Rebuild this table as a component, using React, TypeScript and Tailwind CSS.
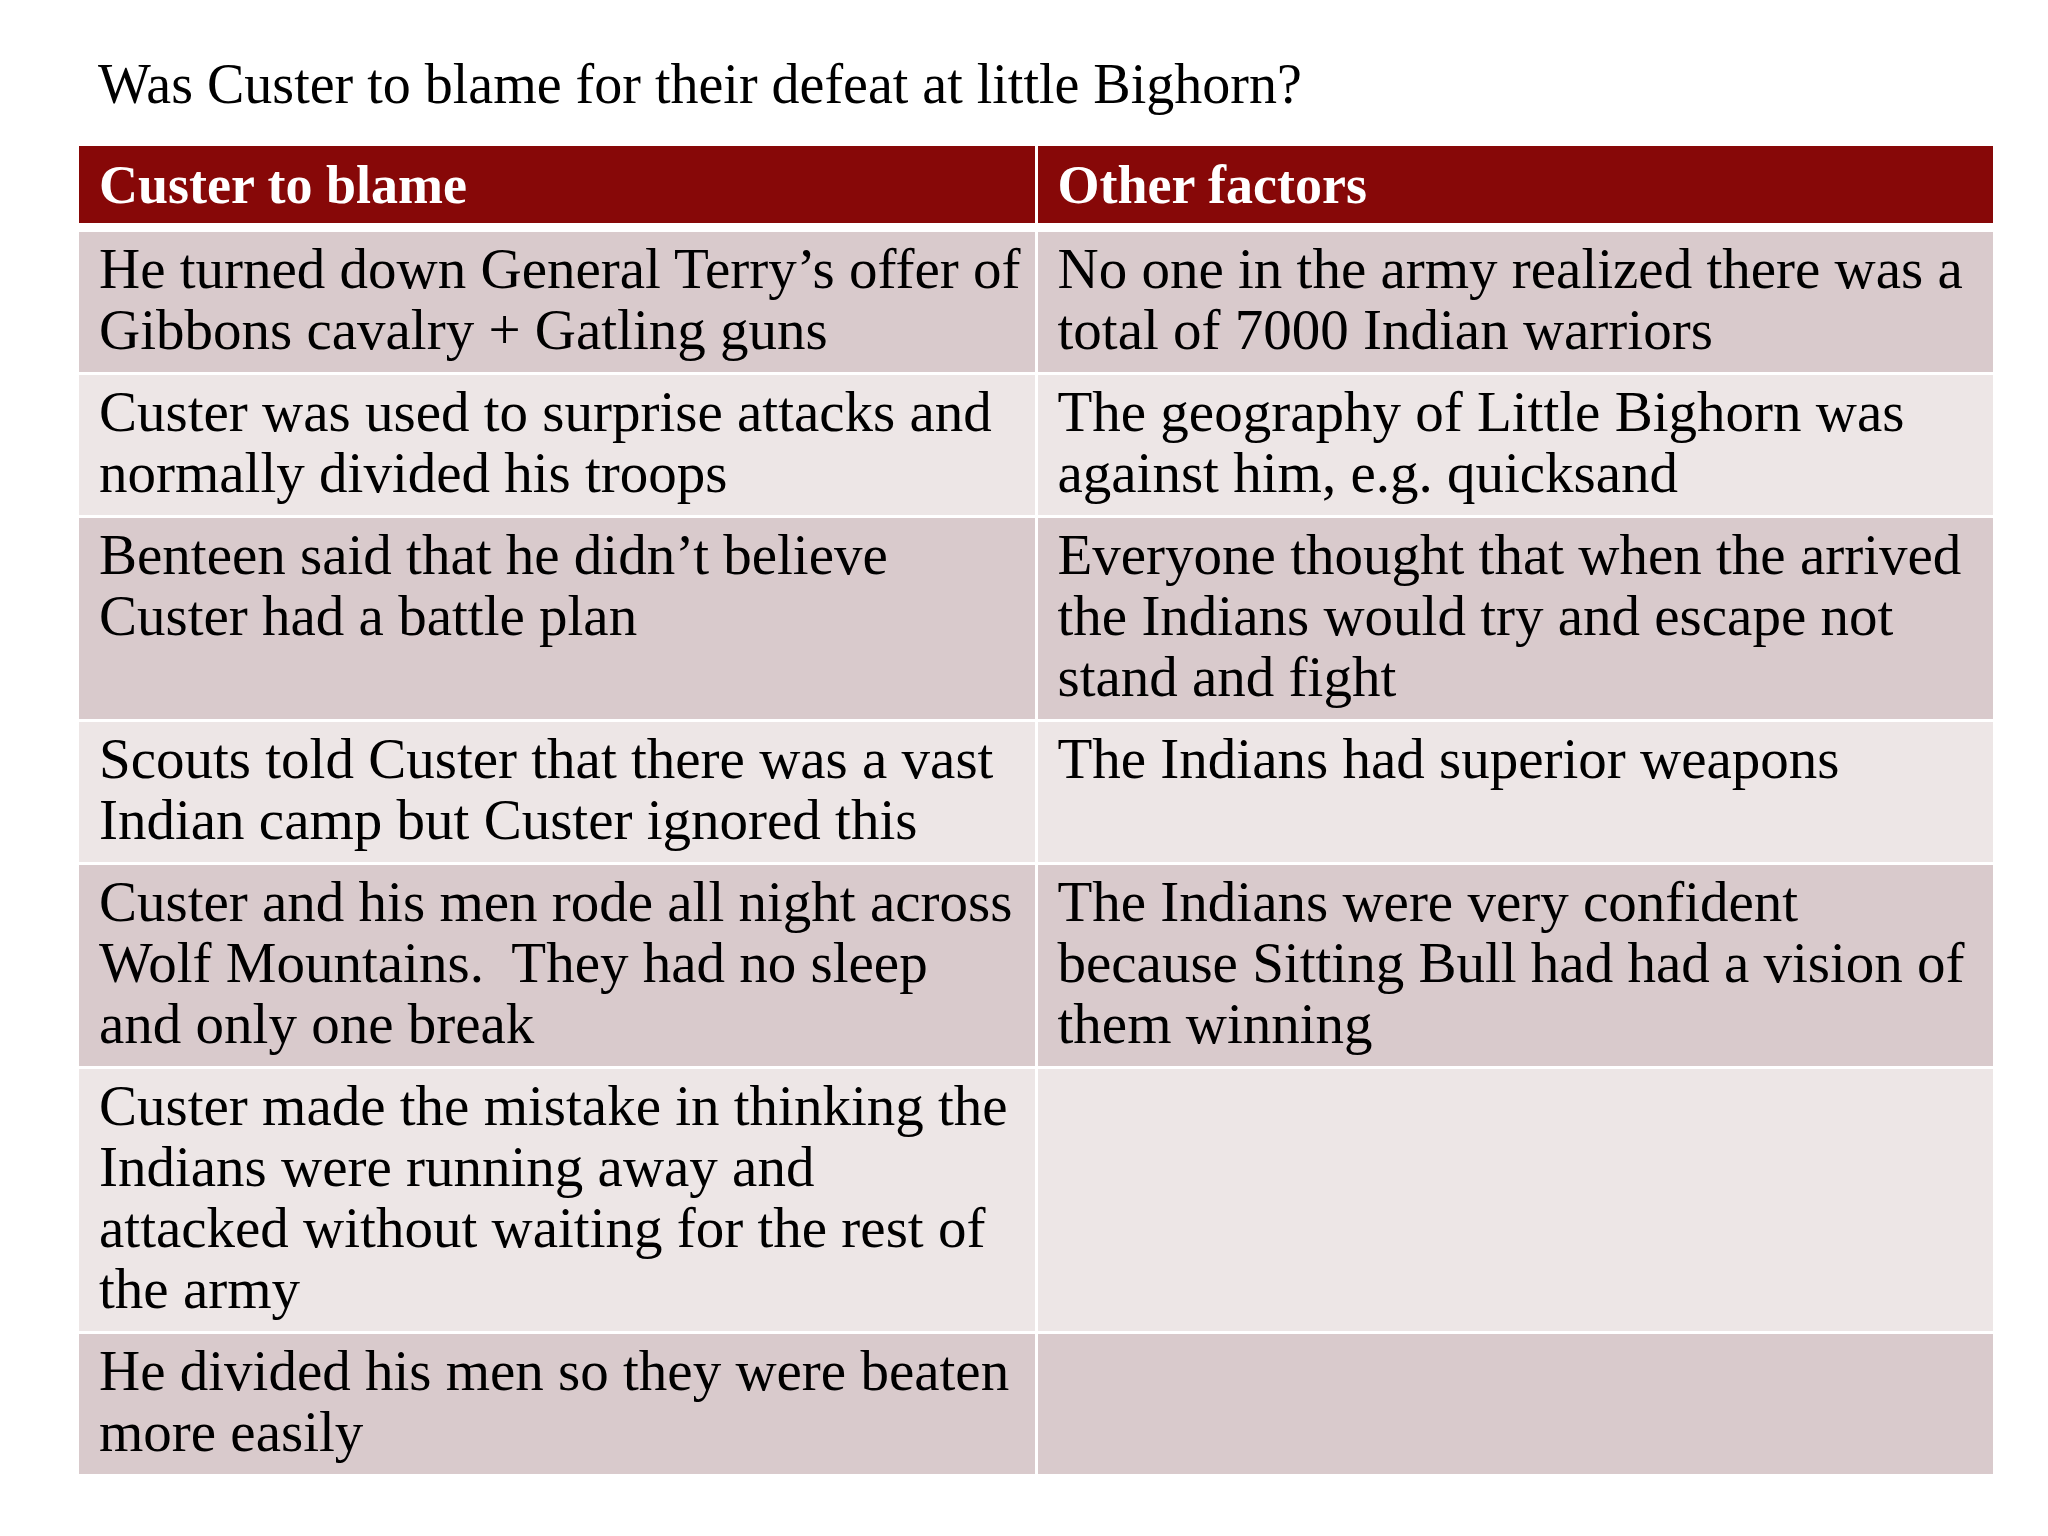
const rows: { left: string[]; right: string[] }[] = [
  {
    left: ['He turned down General Terry’s offer of', 'Gibbons cavalry + Gatling guns'],
    right: ['No one in the army realized there was a', 'total of 7000 Indian warriors'],
  },
  {
    left: ['Custer was used to surprise attacks and', 'normally divided his troops'],
    right: ['The geography of Little Bighorn was', 'against him, e.g. quicksand'],
  },
  {
    left: ['Benteen said that he didn’t believe', 'Custer had a battle plan'],
    right: [
      'Everyone thought that when the arrived',
      'the Indians would try and escape not',
      'stand and fight',
    ],
  },
  {
    left: ['Scouts told Custer that there was a vast', 'Indian camp but Custer ignored this'],
    right: ['The Indians had superior weapons'],
  },
  {
    left: [
      'Custer and his men rode all night across',
      'Wolf Mountains.  They had no sleep',
      'and only one break',
    ],
    right: [
      'The Indians were very confident',
      'because Sitting Bull had had a vision of',
      'them winning',
    ],
  },
  {
    left: [
      'Custer made the mistake in thinking the',
      'Indians were running away and',
      'attacked without waiting for the rest of',
      'the army',
    ],
    right: [],
  },
  {
    left: ['He divided his men so they were beaten', 'more easily'],
    right: [],
  },
];

function Cell({ lines, dark }: { lines: string[]; dark: boolean }) {
  return (
    <div
      className={
        dark
          ? 'bg-[#d9cacc] px-[20px] pt-[6px] pb-[12px]'
          : 'bg-[#ede6e6] px-[20px] pt-[6px] pb-[12px]'
      }
    >
      {lines.map((line, i) => (
        <div key={i} className="whitespace-pre">
          {line}
        </div>
      ))}
    </div>
  );
}

export default function App() {
  return (
    <div
      className="w-[2048px] h-[1536px] bg-white text-black"
      style={{ fontFamily: '"Liberation Serif", "Times New Roman", serif' }}
    >
      {/* Title */}
      <div className="pl-[98px] pt-[52px] text-[56px] leading-[64px]">
        Was Custer to blame for their defeat at little Bighorn?
      </div>

      {/* Table */}
      <div className="ml-[79px] mt-[30px] w-[1914px]">
        <div className="grid grid-cols-2 gap-x-[3px]">
          <div className="h-[77px] bg-[#870808] px-[20px] pt-[9px] text-[54px] leading-[61px] font-bold text-white">
            Custer to blame
          </div>
          <div className="h-[77px] bg-[#870808] px-[20px] pt-[9px] text-[54px] leading-[61px] font-bold text-white">
            Other factors
          </div>
        </div>

        <div className="mt-[9px] grid grid-cols-2 gap-x-[3px] gap-y-[3px] text-[57px] leading-[61px]">
          {rows.map((row, i) => (
            <div key={i} className="contents">
              <Cell lines={row.left} dark={i % 2 === 0} />
              <Cell lines={row.right} dark={i % 2 === 0} />
            </div>
          ))}
        </div>
      </div>
    </div>
  );
}
